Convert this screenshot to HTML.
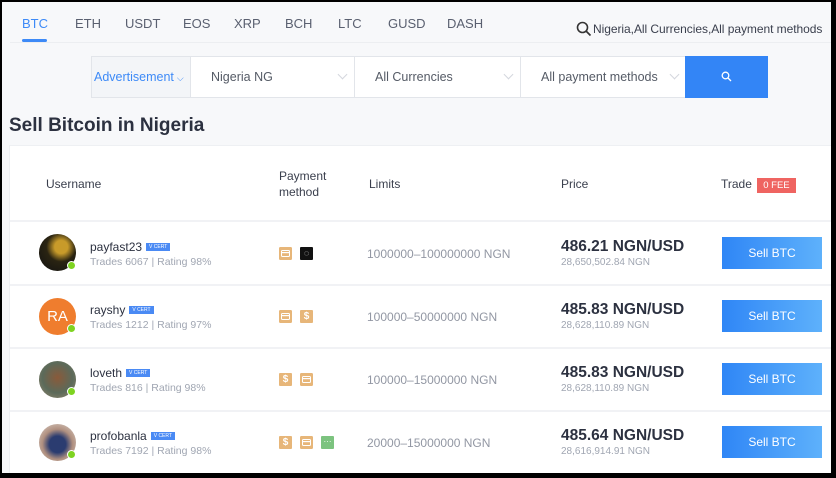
<!DOCTYPE html>
<html><head><meta charset="utf-8"><style>
*{margin:0;padding:0;box-sizing:border-box}
body{width:836px;height:478px;background:#000;font-family:"Liberation Sans",sans-serif;position:relative;overflow:hidden}
#pg{position:absolute;left:2px;top:2px;width:829px;height:471px;background:#f7f8fa;overflow:hidden}
.a{position:absolute;white-space:nowrap}
.tab{top:14px;font-size:13px;color:#5a6070}
.sel{position:absolute;top:54px;height:42px;background:#fff;border:1px solid #e2e5ea;font-size:12.5px;color:#555b66;line-height:40px;padding-left:20px}
.chev{position:absolute;right:8px;top:14px;width:7px;height:7px;border-right:1px solid #d4d7de;border-bottom:1px solid #d4d7de;transform:rotate(45deg)}
#card{position:absolute;left:7px;top:143px;width:830px;height:340px;background:#fff;border:1px solid #eef0f3}
.sep{position:absolute;left:0;right:0;height:2px;background:#f1f2f5}
.hd{font-size:12px;color:#3a3f4d}
.av{position:absolute;width:37px;height:37px;border-radius:50%}
.dot{position:absolute;width:9px;height:9px;border-radius:50%;background:#7ed321;border:1px solid #fff}
.nm{font-size:12px;color:#2c3140}
.cert{display:inline-block;background:#4a8af4;color:#fff;font-size:5px;height:8px;line-height:8px;padding:0 3px;margin-left:4px;vertical-align:3px}
.tr{font-size:10.5px;color:#a0a6b2}
.ic{position:absolute;width:13px;height:13px;border-radius:1px}
.usd{background:#e7b679;color:#fff;font-size:10px;line-height:13px;text-align:center;font-weight:bold}
.lim{font-size:12px;color:#9297a3}
.pr{font-size:15.5px;font-weight:bold;color:#2c3140}
.ps{font-size:10px;color:#a0a6b2}
.btn{position:absolute;left:712px;width:100px;height:32px;background:linear-gradient(90deg,#2f86f6,#5eb1fb);color:#fff;font-size:12px;text-align:center;line-height:32px}
</style></head><body><div id="pg">
<div class="a tab" style="left:20px;color:#3d8af7">BTC</div>
<div class="a" style="left:20px;top:37px;width:25px;height:3px;background:#3d8af7;border-radius:2px"></div>
<div class="a tab" style="left:73px">ETH</div>
<div class="a tab" style="left:123px">USDT</div>
<div class="a tab" style="left:181px">EOS</div>
<div class="a tab" style="left:232px">XRP</div>
<div class="a tab" style="left:283px">BCH</div>
<div class="a tab" style="left:336px">LTC</div>
<div class="a tab" style="left:386px">GUSD</div>
<div class="a tab" style="left:445px">DASH</div>
<div class="a" style="left:8px;top:40px;width:822px;height:1px;background:#eceef1"></div>
<svg class="a" style="left:574px;top:19px" width="16" height="16" viewBox="0 0 16 16"><circle cx="6.5" cy="6.5" r="5" fill="none" stroke="#333" stroke-width="1.6"/><path d="M10 10l4.5 4.5" stroke="#333" stroke-width="1.7"/></svg>
<div class="a" style="left:591px;top:20px;font-size:12px;color:#3a3f4d;letter-spacing:-0.05px">Nigeria,All Currencies,All payment methods</div>
<div class="sel" style="left:89px;width:100px;padding-left:2px;color:#3d8af7;background:#f3f5f8">Advertisement<span style="font-size:9px;margin-left:3px">⌵</span></div>
<div class="sel" style="left:188px;width:165px">Nigeria NG<i class="chev"></i></div>
<div class="sel" style="left:352px;width:167px">All Currencies<i class="chev"></i></div>
<div class="sel" style="left:518px;width:167px">All payment methods<i class="chev"></i></div>
<div class="a" style="left:683px;top:54px;width:83px;height:42px;background:#3385f6"></div>
<svg class="a" style="left:719px;top:69px" width="11" height="11" viewBox="0 0 11 11"><circle cx="4.5" cy="4.5" r="3.3" fill="none" stroke="#fff" stroke-width="1.3"/><path d="M7 7l3 3" stroke="#fff" stroke-width="1.3"/></svg>
<div class="a" style="left:7px;top:113px;font-size:19px;font-weight:bold;color:#2c3140">Sell Bitcoin in Nigeria</div>
<svg width="0" height="0" style="position:absolute"><defs><g id="cd"><rect width="13" height="13" rx="1" fill="#e7b679"/><rect x="2.5" y="3.5" width="8" height="6" rx="1" fill="none" stroke="#fff" stroke-width="1"/><rect x="2.5" y="5" width="8" height="1.2" fill="#fff"/></g></defs></svg>
<div id="card">
<div class="a hd" style="left:36px;top:31px">Username</div>
<div class="a hd" style="left:269px;top:22px;line-height:16px">Payment<br>method</div>
<div class="a hd" style="left:359px;top:31px">Limits</div>
<div class="a hd" style="left:551px;top:31px">Price</div>
<div class="a hd" style="left:711px;top:31px">Trade <span style="background:#ef6461;color:#fff;font-size:9.5px;padding:2px 6px;margin-left:2px">0 FEE</span></div>
<div class="sep" style="top:74px"></div>
<div class="sep" style="top:138px"></div>
<div class="sep" style="top:201px"></div>
<div class="sep" style="top:264px"></div>

<div class="av" style="left:29px;top:88px;background:radial-gradient(circle at 60% 35%,#c89b2a 0 20%,#2a2412 45%,#111)"></div><div class="dot" style="left:57px;top:115px"></div>
<div class="a nm" style="left:80px;top:94px">payfast23<span class="cert">V CERT</span></div>
<div class="a tr" style="left:80px;top:110px">Trades 6067 | Rating 98%</div>
<svg class="ic" style="left:269px;top:101px" viewBox="0 0 13 13"><use href="#cd"/></svg><div class="ic" style="left:290px;top:101px;background:#111;color:#fff;font-size:9px;text-align:center;line-height:13px">◌</div>
<div class="a lim" style="left:357px;top:101px">1000000–100000000 NGN</div>
<div class="a pr" style="left:551px;top:92px">486.21 NGN/USD</div>
<div class="a ps" style="left:551px;top:111px">28,650,502.84 NGN</div>
<div class="btn" style="top:91px">Sell BTC</div>

<div class="av" style="left:29px;top:152px;background:#ef7d2e;color:#fff;font-size:15px;text-align:center;line-height:37px">RA</div><div class="dot" style="left:57px;top:178px"></div>
<div class="a nm" style="left:80px;top:157px">rayshy<span class="cert">V CERT</span></div>
<div class="a tr" style="left:80px;top:173px">Trades 1212 | Rating 97%</div>
<svg class="ic" style="left:269px;top:164px" viewBox="0 0 13 13"><use href="#cd"/></svg><div class="ic usd" style="left:290px;top:164px">$</div>
<div class="a lim" style="left:357px;top:164px">100000–50000000 NGN</div>
<div class="a pr" style="left:551px;top:155px">485.83 NGN/USD</div>
<div class="a ps" style="left:551px;top:174px">28,628,110.89 NGN</div>
<div class="btn" style="top:154px">Sell BTC</div>

<div class="av" style="left:29px;top:215px;background:radial-gradient(circle at 50% 45%,#8a5a3a,#5b6a5a 55%,#9a8a70)"></div><div class="dot" style="left:57px;top:241px"></div>
<div class="a nm" style="left:80px;top:220px">loveth<span class="cert">V CERT</span></div>
<div class="a tr" style="left:80px;top:236px">Trades 816 | Rating 98%</div>
<div class="ic usd" style="left:269px;top:227px">$</div><svg class="ic" style="left:290px;top:227px" viewBox="0 0 13 13"><use href="#cd"/></svg>
<div class="a lim" style="left:357px;top:227px">100000–15000000 NGN</div>
<div class="a pr" style="left:551px;top:218px">485.83 NGN/USD</div>
<div class="a ps" style="left:551px;top:237px">28,628,110.89 NGN</div>
<div class="btn" style="top:217px">Sell BTC</div>

<div class="av" style="left:29px;top:278px;background:radial-gradient(circle at 50% 55%,#2b3c70 0 30%,#b09080 55%,#e0d8d0)"></div><div class="dot" style="left:57px;top:304px"></div>
<div class="a nm" style="left:80px;top:283px">profobanla<span class="cert">V CERT</span></div>
<div class="a tr" style="left:80px;top:299px">Trades 7192 | Rating 98%</div>
<div class="ic usd" style="left:269px;top:290px">$</div><svg class="ic" style="left:290px;top:290px" viewBox="0 0 13 13"><use href="#cd"/></svg><div class="ic" style="left:311px;top:290px;background:#7cc37f;color:#fff;font-size:8px;text-align:center;line-height:11px">···</div>
<div class="a lim" style="left:357px;top:290px">20000–15000000 NGN</div>
<div class="a pr" style="left:551px;top:281px">485.64 NGN/USD</div>
<div class="a ps" style="left:551px;top:300px">28,616,914.91 NGN</div>
<div class="btn" style="top:280px">Sell BTC</div>
</div>
</div></body></html>
